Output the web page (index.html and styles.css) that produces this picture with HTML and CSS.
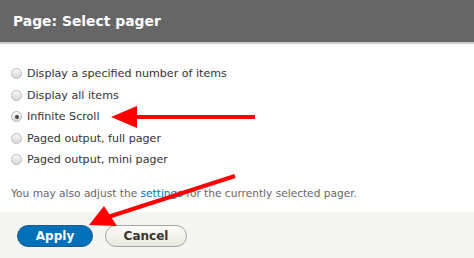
FILE: index.html
```html
<!DOCTYPE html>
<html>
<head>
<meta charset="utf-8">
<link rel="stylesheet" href="styles.css">
</head>
<body>
<div class="dialog">
  <div class="header"><h1 class="title">Page: Select pager</h1></div>
  <div class="content">
    <div class="options">
      <label class="option"><span class="radio"></span>Display a specified number of items</label>
      <label class="option"><span class="radio"></span>Display all items</label>
      <label class="option"><span class="radio checked"></span>Infinite Scroll</label>
      <label class="option"><span class="radio"></span>Paged output, full pager</label>
      <label class="option"><span class="radio"></span>Paged output, mini pager</label>
    </div>
    <p class="help">You may also adjust the <a class="link">settings</a> for the currently selected pager.</p>
  </div>
  <div class="footer">
    <button class="btn primary">Apply</button>
    <button class="btn">Cancel</button>
  </div>
  <svg class="arrows" width="474" height="258" viewBox="0 0 474 258">
    <line x1="255" y1="117" x2="130" y2="117" stroke="#f00" stroke-width="4"/>
    <polygon points="111,117 137,106 137,128" fill="#f00"/>
    <line x1="235" y1="176" x2="105" y2="218" stroke="#f00" stroke-width="4"/>
    <polygon points="89,225 104,206 117,226" fill="#f00"/>
  </svg>
</div>
</body>
</html>
```

FILE: styles.css
```css
html, body {
  margin: 0;
  padding: 0;
  background: #fff;
}
.dialog {
  position: relative;
  width: 474px;
  height: 258px;
  overflow: hidden;
  font-family: "DejaVu Sans", sans-serif;
  display: flex;
  flex-direction: column;
}
.header {
  background: #666;
  border-bottom: 2px solid #ccc;
  display: flex;
  align-items: center;
  padding-left: 13px;
  box-sizing: border-box;
  height: 44px;
  flex: none;
}
.title {
  margin: 0;
  color: #fff;
  font-size: 13.9px;
  font-weight: bold;
  padding-bottom: 0;
}
.content {
  padding: 19px 11px 0 11px;
  flex: 1;
}
.options {
  display: flex;
  flex-direction: column;
}
.option {
  display: flex;
  align-items: center;
  height: 21.5px;
  font-size: 11.1px;
  color: #333;
}
.radio {
  width: 9px;
  height: 9px;
  border-radius: 50%;
  border: 1px solid #b8b8b8;
  background: linear-gradient(#fafafa, #d8d8d8);
  margin-right: 5px;
  flex: none;
  position: relative;
}
.radio.checked::after {
  content: "";
  position: absolute;
  left: 2.5px;
  top: 2.5px;
  width: 4px;
  height: 4px;
  border-radius: 50%;
  background: #444;
}
.help {
  margin: 16px 0 0 0;
  font-size: 10.6px;
  color: #666;
}
.link {
  color: #0074bd;
}
.footer {
  height: 46px;
  background: #f5f5f2;
  display: flex;
  align-items: center;
  gap: 12px;
  padding-left: 17px;
  padding-top: 2px;
  box-sizing: border-box;
  flex: none;
}
.btn {
  font-family: "DejaVu Sans", sans-serif;
  font-weight: bold;
  font-size: 12px;
  height: 22px;
  border-radius: 11px;
  border: 1px solid #a6a6a6;
  background: linear-gradient(#fcfcfa, #e9e9dd);
  color: #333;
  padding: 0;
  width: 82px;
}
.btn.primary {
  width: 76px;
  background: #0071b8;
  border-color: #1e5c90;
  color: #fff;
}
.arrows {
  position: absolute;
  left: 0;
  top: 0;
}
```
